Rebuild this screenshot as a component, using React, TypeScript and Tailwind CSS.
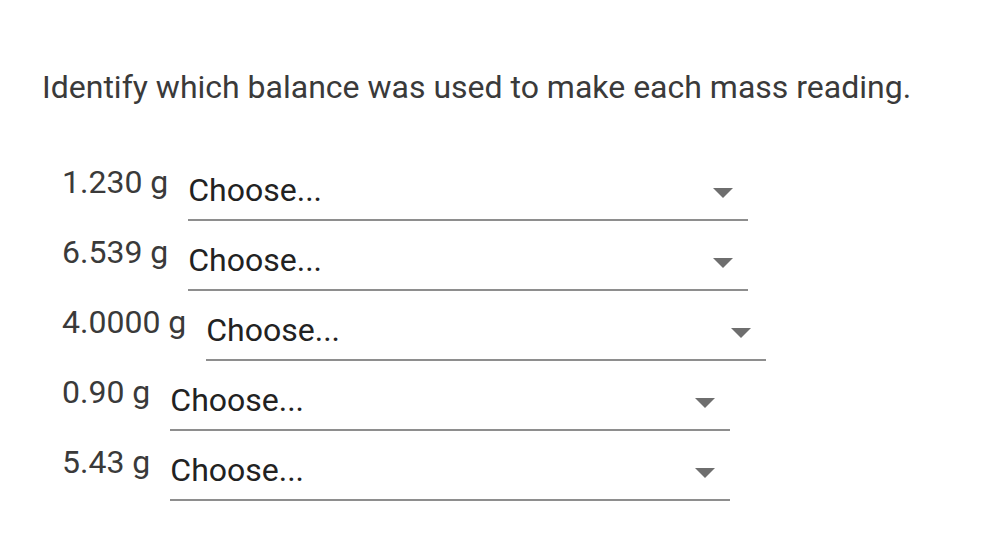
import React from 'react';

const readings = ["1.230 g", "6.539 g", "4.0000 g", "0.90 g", "5.43 g"];

const Row = ({ label }: { label: string }) => {
  return (
    <div className="flex items-end gap-5 h-[70px]">
      <span className="text-[32px] leading-[32px] text-[#3a3a3a] mb-[23px] whitespace-nowrap">{label}</span>

      {/* Select */}
      <div className="w-[560px] flex items-start justify-between pb-[13px] pr-[15px] border-b-2 border-[#8e8e8e] cursor-pointer">
        <span className="text-[32px] leading-[32px] text-[#222222]">Choose...</span>
        <svg width="20" height="10" viewBox="0 0 20 10" className="mt-[14px]">
          <path d="M0 0 L20 0 L10 10 Z" fill="#6e6e6e" />
        </svg>
      </div>
    </div>
  );
};

const App = () => {
  return (
    <div className="w-full min-h-[538px] bg-white pl-[42px] pt-[71px]" style={{ fontFamily: "Roboto, 'Noto Sans', sans-serif" }}>
      <p className="text-[32px] leading-[32px] text-[#3a3a3a]">Identify which balance was used to make each mass reading.</p>

      <div className="flex flex-col pl-5 mt-[48px]">
        {readings.map((r) => (
          <Row key={r} label={r} />
        ))}
      </div>
    </div>
  );
};

export default App;
